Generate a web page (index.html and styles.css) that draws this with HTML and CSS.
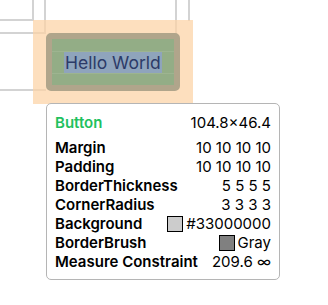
FILE: index.html
```html
<!DOCTYPE html>
<html lang="en">
<head>
    <meta charset="UTF-8">
    <meta name="viewport" content="width=device-width, initial-scale=1.0">
    <title>Layout Inspector</title>
    <link rel="stylesheet" href="styles.css">
</head>
<body>
    <div id="canvas">
        <!-- outlines of the surrounding controls -->
        <div class="guide v" style="left: 32px; top: 0; height: 21px;"></div>
        <div class="guide h" style="left: 0; top: 19px; width: 34px;"></div>
        <div class="guide v" style="left: 44px; top: 0; height: 34px;"></div>
        <div class="guide h" style="left: 0; top: 32px; width: 46px;"></div>
        <div class="guide v" style="left: 175px; top: 0; height: 34px;"></div>
        <div class="guide v" style="left: 188px; top: 0; height: 21px;"></div>
        <div class="guide h" style="left: 0; top: 89px; width: 46px;"></div>

        <!-- margin / border / padding / content adorner -->
        <div class="adorner margin">
            <div class="border-box">
                <div class="padding-box">
                    <div class="content-row">
                        <div class="content">Hello World</div>
                    </div>
                </div>
            </div>
        </div>

        <div class="tip">
            <div class="row tip-head">
                <span class="type">Button</span>
                <span>104.8×46.4</span>
            </div>
            <div class="row"><span class="key">Margin</span><span class="val">10 10 10 10</span></div>
            <div class="row"><span class="key">Padding</span><span class="val">10 10 10 10</span></div>
            <div class="row"><span class="key">BorderThickness</span><span class="val">5 5 5 5</span></div>
            <div class="row"><span class="key">CornerRadius</span><span class="val">3 3 3 3</span></div>
            <div class="row"><span class="key">Background</span><span class="val"><i class="swatch light"></i>#33000000</span></div>
            <div class="row"><span class="key">BorderBrush</span><span class="val"><i class="swatch gray"></i>Gray</span></div>
            <div class="row"><span class="key">Measure Constraint</span><span class="val">209.6 ∞</span></div>
        </div>
    </div>
</body>
</html>
```

FILE: styles.css
```css
body {
    margin: 0;
    background-color: #fff;
    font-family: Inter, "Noto Sans", sans-serif;
    overflow: hidden;
}
#canvas {
    position: relative;
    width: 328px;
    height: 305px;
}
.guide {
    position: absolute;
    background-color: #d3d3d3;
}
.guide.v {
    width: 2px;
}
.guide.h {
    height: 2px;
}
.adorner {
    position: absolute;
    left: 33px;
    top: 20px;
}
.margin {
    padding: 13px 12.5px 12.5px;
    background-color: rgba(252, 210, 165, 0.72);
}
.border-box {
    border: 6px solid #b0a58b;
    border-radius: 5px;
}
.padding-box {
    padding: 12.5px 0;
    background-color: #93ad86;
}
.content-row {
    padding: 0 12.5px;
    box-shadow: 0 -1px 0 #9db490, 0 1px 0 #9db490;
}
.content {
    height: 21px;
    line-height: 21px;
    padding: 0 1px;
    background-color: #8fa4bc;
    color: #2c3b68;
    font-size: 17.5px;
}
.tip {
    position: absolute;
    left: 46px;
    top: 103px;
    width: 216px;
    padding: 9px 8px 8px 8px;
    background-color: #fff;
    border: 1px solid #b5b5b5;
    border-radius: 5px;
    font-size: 15px;
    color: #000;
}
.row {
    display: flex;
    justify-content: space-between;
    align-items: center;
    line-height: 19px;
    white-space: nowrap;
}
.tip-head {
    margin-bottom: 6px;
}
.type {
    color: #1fc15e;
    font-weight: 600;
}
.key {
    font-weight: 600;
}
.val {
    display: flex;
    align-items: center;
}
.swatch {
    display: inline-block;
    width: 14px;
    height: 14px;
    border: 1px solid #000;
    margin-right: 3px;
}
.swatch.light {
    background-color: #cccccc;
}
.swatch.gray {
    background-color: #808080;
}
```
